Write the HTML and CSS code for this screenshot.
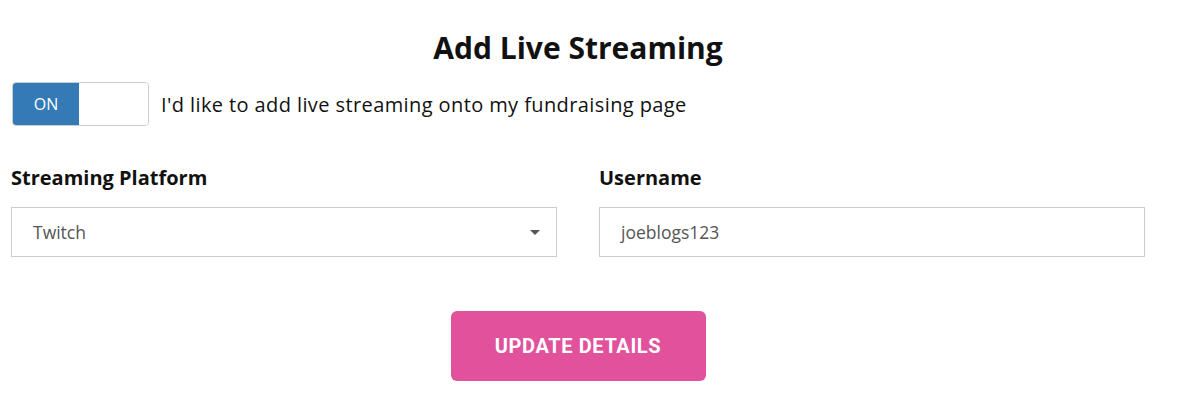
FILE: index.html
```html
<!DOCTYPE html>
<html lang="en">
<head>
    <meta charset="UTF-8">
    <meta name="viewport" content="width=device-width, initial-scale=1.0">
    <title>Add Live Streaming</title>
    <link rel="stylesheet" href="styles.css">
</head>
<body>
    <div class="container">
        <h1 class="title">Add Live Streaming</h1>

        <div class="toggle-row">
            <div class="toggle">
                <span class="toggle-on">ON</span>
                <span class="toggle-off"></span>
            </div>
            <span class="toggle-label">I'd like to add live streaming onto my fundraising page</span>
        </div>

        <div class="fields">
            <div class="form-group">
                <label for="platform">Streaming Platform</label>
                <div class="select" id="platform">
                    <span>Twitch</span>
                    <svg class="caret" width="10" height="5" viewBox="0 0 10 5"><path d="M0 0h10L5 5z" fill="#555"/></svg>
                </div>
            </div>
            <div class="form-group">
                <label for="username">Username</label>
                <div class="input" id="username">joeblogs123</div>
            </div>
        </div>

        <div class="actions">
            <button class="btn-update">UPDATE DETAILS</button>
        </div>
    </div>
</body>
</html>
```

FILE: styles.css
```css
* {
    margin: 0;
    padding: 0;
    box-sizing: border-box;
}

:root {
    --text-color: #111;
    --muted-color: #555;
    --border-color: #cccccc;
    --toggle-color: #337ab7;
    --button-color: #e1519c;
}

body {
    background: #fff;
    color: var(--text-color);
    font-family: "Open Sans", Lato, sans-serif;
}

.container {
    width: 1134px;
    margin-left: 11px;
    padding-top: 30px;
}

.title {
    font-size: 30px;
    line-height: 36px;
    font-weight: bold;
    text-align: center;
}

/* toggle */
.toggle-row {
    display: flex;
    align-items: center;
    margin-top: 16px;
}

.toggle {
    display: flex;
    width: 137px;
    height: 44px;
    border: 1px solid var(--border-color);
    border-radius: 4px;
    overflow: hidden;
    margin-left: 1px;
}

.toggle-on {
    width: 66px;
    background: var(--toggle-color);
    color: white;
    font-size: 16px;
    display: flex;
    align-items: center;
    justify-content: center;
}

.toggle-off {
    flex: 1;
    background: white;
}

.toggle-label {
    margin-left: 12px;
    font-size: 20px;
    letter-spacing: 0.4px;
}

/* fields */
.fields {
    display: grid;
    grid-template-columns: 546px 546px;
    gap: 42px;
    margin-top: 40px;
}

label {
    display: block;
    font-size: 20px;
    font-weight: bold;
    line-height: 24px;
    margin-bottom: 17px;
}

.select, .input {
    height: 50px;
    border: 1px solid var(--border-color);
    padding: 0 16px 0 21px;
    display: flex;
    align-items: center;
    font-size: 17.5px;
    color: var(--muted-color);
}

.select {
    justify-content: space-between;
}

/* button */
.actions {
    display: flex;
    justify-content: center;
    margin-top: 54px;
}

.btn-update {
    width: 255px;
    height: 70px;
    background: var(--button-color);
    color: white;
    border: none;
    border-radius: 6px;
    font-family: Roboto, sans-serif;
    font-weight: bold;
    font-size: 20px;
    letter-spacing: 0.6px;
    cursor: pointer;
}
```
